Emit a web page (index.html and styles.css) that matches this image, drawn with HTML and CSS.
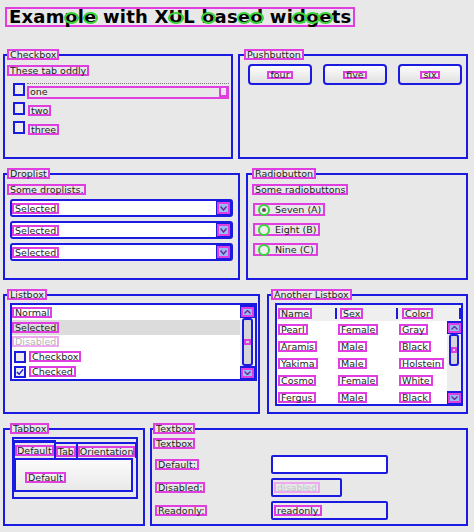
FILE: index.html
```html
<!DOCTYPE html>
<html lang="en">
<head>
    <meta charset="UTF-8">
    <meta name="viewport" content="width=device-width, initial-scale=1.0">
    <title>Example with XUL based widgets</title>
    <link rel="stylesheet" href="styles.css">
</head>
<body>
    <h1 class="title"><span class="t">Exam<span class="ring">p</span>l<span class="ring">e</span> with X<span class="ring">U</span>L <span class="ring">b</span>as<span class="ring">e</span><span class="ring">d</span> wi<span class="ring">d</span><span class="ring">g</span><span class="ring">e</span>ts</span></h1>

    <div class="rows">
        <div class="row row-1">
            <fieldset class="group group-check">
                <legend class="t">Checkbox</legend>
                <div class="group-body">
                    <span class="t">These tab oddly</span>
                    <div class="checks">
                        <div class="check">
                            <span class="checkbox"></span>
                            <span class="focus-line"><span class="t t-wide">one<span class="mini"></span></span></span>
                        </div>
                        <div class="check">
                            <span class="checkbox"></span>
                            <span class="t">two</span>
                        </div>
                        <div class="check">
                            <span class="checkbox"></span>
                            <span class="t">three</span>
                        </div>
                    </div>
                </div>
            </fieldset>

            <fieldset class="group group-push">
                <legend class="t">Pushbutton</legend>
                <div class="buttons">
                    <button class="btn"><span class="t">four</span></button>
                    <button class="btn"><span class="t">five</span></button>
                    <button class="btn"><span class="t">six</span></button>
                </div>
            </fieldset>
        </div>

        <div class="row row-2">
            <fieldset class="group">
                <legend class="t">Droplist</legend>
                <div class="group-body">
                    <span class="t">Some droplists.</span>
                    <div class="menulists">
                        <div class="menulist">
                            <span class="t">Selected</span>
                            <span class="drop"><span class="drop-arrow"><svg width="7" height="5" viewBox="0 0 7 5"><polyline points="0.5,0.5 3.5,4 6.5,0.5" fill="none" stroke="#6b2590" stroke-width="1.4"/></svg></span></span>
                        </div>
                        <div class="menulist">
                            <span class="t">Selected</span>
                            <span class="drop"><span class="drop-arrow"><svg width="7" height="5" viewBox="0 0 7 5"><polyline points="0.5,0.5 3.5,4 6.5,0.5" fill="none" stroke="#6b2590" stroke-width="1.4"/></svg></span></span>
                        </div>
                        <div class="menulist">
                            <span class="t">Selected</span>
                            <span class="drop"><span class="drop-arrow"><svg width="7" height="5" viewBox="0 0 7 5"><polyline points="0.5,0.5 3.5,4 6.5,0.5" fill="none" stroke="#6b2590" stroke-width="1.4"/></svg></span></span>
                        </div>
                    </div>
                </div>
            </fieldset>

            <fieldset class="group group-radio">
                <legend class="t">Radiobutton</legend>
                <div class="group-body">
                    <span class="t">Some radiobuttons</span>
                    <div class="radios">
                        <span class="radio"><span class="radio-dot checked"></span>Seven (A)</span>
                        <span class="radio"><span class="radio-dot"></span>Eight (B)</span>
                        <span class="radio"><span class="radio-dot"></span>Nine (C)</span>
                    </div>
                </div>
            </fieldset>
        </div>

        <div class="row row-3">
            <fieldset class="group group-list">
                <legend class="t">Listbox</legend>
                <div class="listbox">
                    <div class="list-items">
                        <div class="item"><span class="t">Normal</span></div>
                        <div class="item selected"><span class="t">Selected</span></div>
                        <div class="item disabled"><span class="t">Disabled</span></div>
                        <div class="item"><span class="checkbox small"></span><span class="t">Checkbox</span></div>
                        <div class="item">
                            <span class="checkbox small"><svg width="9" height="8" viewBox="0 0 9 8"><polyline points="1,4 3.5,6.5 8,1" fill="none" stroke="#1a1ae0" stroke-width="1.6"/></svg></span>
                            <span class="t">Checked</span>
                        </div>
                    </div>
                    <div class="scrollbar">
                        <span class="sb-btn"><span class="sb-arrow"><svg width="7" height="4" viewBox="0 0 7 4"><polyline points="0.5,3.5 3.5,0.5 6.5,3.5" fill="none" stroke="#6b2590" stroke-width="1.3"/></svg></span></span>
                        <span class="sb-track"><span class="sb-thumb fill"><span class="grip"></span></span></span>
                        <span class="sb-btn"><span class="sb-arrow"><svg width="7" height="4" viewBox="0 0 7 4"><polyline points="0.5,0.5 3.5,3.5 6.5,0.5" fill="none" stroke="#6b2590" stroke-width="1.3"/></svg></span></span>
                    </div>
                </div>
            </fieldset>

            <fieldset class="group group-tree">
                <legend class="t">Another Listbox</legend>
                <div class="tree">
                    <div class="tree-head">
                        <span class="th"><span class="t">Name</span></span>
                        <span class="th"><span class="t">Sex</span></span>
                        <span class="th"><span class="t">Color</span></span>
                        <span class="th"></span>
                    </div>
                    <div class="tree-body">
                        <div class="tree-rows">
                            <div class="tree-row"><span class="t">Pearl</span><span class="t">Female</span><span class="t">Gray</span></div>
                            <div class="tree-row"><span class="t">Aramis</span><span class="t">Male</span><span class="t">Black</span></div>
                            <div class="tree-row"><span class="t">Yakima</span><span class="t">Male</span><span class="t">Holstein</span></div>
                            <div class="tree-row"><span class="t">Cosmo</span><span class="t">Female</span><span class="t">White</span></div>
                            <div class="tree-row"><span class="t">Fergus</span><span class="t">Male</span><span class="t">Black</span></div>
                        </div>
                        <div class="scrollbar narrow">
                            <span class="sb-btn"><span class="sb-arrow"><svg width="7" height="4" viewBox="0 0 7 4"><polyline points="0.5,3.5 3.5,0.5 6.5,3.5" fill="none" stroke="#6b2590" stroke-width="1.3"/></svg></span></span>
                            <span class="sb-track"><span class="sb-thumb"><span class="grip"></span></span></span>
                            <span class="sb-btn"><span class="sb-arrow"><svg width="7" height="4" viewBox="0 0 7 4"><polyline points="0.5,0.5 3.5,3.5 6.5,0.5" fill="none" stroke="#6b2590" stroke-width="1.3"/></svg></span></span>
                        </div>
                    </div>
                </div>
            </fieldset>
        </div>

        <div class="row row-4">
            <fieldset class="group group-tabs">
                <legend class="t">Tabbox</legend>
                <div class="tabbox">
                    <div class="tabs">
                        <span class="tab selected"><span class="t">Default</span></span>
                        <span class="tab"><span class="t">Tab</span></span>
                        <span class="tab"><span class="t">Orientation</span></span>
                    </div>
                    <div class="tabpanel"><span class="t">Default</span></div>
                </div>
            </fieldset>

            <fieldset class="group group-text">
                <legend class="t">Textbox</legend>
                <div class="group-body">
                    <span class="t">Textbox</span>
                    <div class="form">
                        <span class="t">Default:</span>
                        <span class="field"></span>
                        <span class="t">Disabled:</span>
                        <span class="field disabled"><span class="t">disabled</span></span>
                        <span class="t">Readonly:</span>
                        <span class="field readonly"><span class="t">readonly</span></span>
                    </div>
                </div>
            </fieldset>
        </div>
    </div>
</body>
</html>
```

FILE: styles.css
```css
* {
    margin: 0;
    padding: 0;
    box-sizing: border-box;
}

body {
    font-family: 'DejaVu Sans', Verdana, sans-serif;
    font-size: 9.5px;
    color: #1e1e1e;
    background-color: #e8e8e8;
    padding: 7px 6px 0 3px;
}

/* text runs get a magenta frame */
.t {
    display: inline-block;
    border: 2px solid #e03ee0;
    padding: 0 1px;
    line-height: 7px;
    white-space: nowrap;
}

.title {
    display: flex;
    font-size: 18px;
    font-weight: bold;
    letter-spacing: 0.2px;
    color: #000;
    margin: 0 0 22px 2px;
}

.title .t {
    line-height: 16px;
    padding: 0 2px;
}

.ring {
    position: relative;
}

.ring::after {
    content: '';
    position: absolute;
    left: -1px;
    right: -1px;
    top: 6px;
    bottom: 3px;
    border: 2px solid #38d438;
    border-radius: 50%;
}

.rows {
    display: flex;
    flex-direction: column;
    gap: 9px;
}

.row {
    display: grid;
}

.row-1 {
    grid-template-columns: 230px 1fr;
    column-gap: 5px;
    height: 110px;
}

.row-2 {
    grid-template-columns: 237px 1fr;
    column-gap: 6px;
    height: 112px;
}

.row-3 {
    grid-template-columns: 257px 1fr;
    column-gap: 7px;
    height: 125px;
}

.row-4 {
    grid-template-columns: 142px 1fr;
    column-gap: 5px;
    height: 103px;
}

/* group boxes */
.group {
    border: 2px solid #1a1ae0;
    padding: 5px 2px 0;
    min-width: 0;
}

.group-body {
    display: flex;
    flex-direction: column;
    align-items: flex-start;
}

.group-push {
    padding: 4px 4px 0;
}

.group-radio {
    padding-left: 4px;
}

.group-list,
.group-tree {
    padding: 3px 0 0 2px;
}

.group-tabs {
    padding: 3px 2px 0 5px;
}

.group-text {
    padding: 4px 2px 0 1px;
}

/* checkboxes */
.checks {
    display: flex;
    flex-direction: column;
    gap: 6px;
    margin-top: 7px;
    align-self: stretch;
}

.check {
    display: flex;
    align-items: flex-start;
    gap: 3px;
    height: 13px;
    margin-left: 6px;
}

.check .t {
    margin-top: 3px;
}

.checkbox {
    flex-shrink: 0;
    width: 12px;
    height: 13px;
    border: 2px solid #1a1ae0;
    background-color: #ececec;
    display: flex;
    align-items: center;
    justify-content: center;
}

.checkbox.small {
    width: 12px;
    height: 12px;
    margin-left: 2px;
}

.focus-line {
    flex: 1;
    display: flex;
    border-top: 1px dotted #7a7a7a;
    margin-left: -1px;
    padding-top: 2px;
}

.focus-line .t {
    margin-top: 0;
}

.t-wide {
    flex: 1;
    display: flex;
    justify-content: space-between;
}

.mini {
    width: 9px;
    height: 11px;
    margin: -2px -2px 0 0;
    border: 2px solid #e03ee0;
}

/* push buttons */
.buttons {
    display: flex;
    gap: 11px;
    padding-left: 4px;
}

.btn {
    width: 64px;
    height: 21px;
    border: 2px solid #1a1ae0;
    border-radius: 4px;
    background: linear-gradient(#fdfdfd, #e0e0e0);
    display: flex;
    align-items: center;
    justify-content: center;
    font: inherit;
    color: inherit;
}

.btn .t {
    line-height: 4px;
}

/* droplists */
.menulists {
    display: flex;
    flex-direction: column;
    gap: 4px;
    margin-top: 4px;
    align-self: stretch;
}

.menulist {
    height: 18px;
    margin: 0 3px;
    border: 2px solid #1a1ae0;
    border-radius: 3px;
    background-color: #fff;
    display: flex;
    align-items: center;
    justify-content: space-between;
}

.drop {
    align-self: stretch;
    width: 15px;
    padding: 1px;
    background-color: #1a1ae0;
    display: flex;
}

.drop-arrow {
    flex: 1;
    background-color: #93bcf6;
    border: 2px solid #e03ee0;
    display: flex;
    align-items: center;
    justify-content: center;
}

/* radio buttons */
.radios {
    display: flex;
    flex-direction: column;
    align-items: flex-start;
    gap: 7px;
    margin: 8px 0 0 1px;
}

.radio {
    display: flex;
    align-items: center;
    gap: 5px;
    height: 13px;
    padding: 0 2px 0 3px;
    border: 2px solid #e03ee0;
    white-space: nowrap;
}

.radio-dot {
    width: 12px;
    height: 12px;
    border: 2px solid #38d438;
    border-radius: 50%;
    background-color: #f0f0f0;
    display: flex;
    align-items: center;
    justify-content: center;
}

.radio-dot.checked::after {
    content: '';
    width: 4px;
    height: 4px;
    border-radius: 50%;
    background-color: #555;
}

/* listbox */
.listbox {
    display: flex;
    height: 78px;
    margin-left: 3px;
    width: 247px;
    border: 2px solid #1a1ae0;
    background-color: #fff;
}

.list-items {
    flex: 1;
    display: flex;
    flex-direction: column;
}

.item {
    height: 15px;
    display: flex;
    align-items: center;
    gap: 3px;
}

.item.selected {
    background-color: #dcdcdc;
}

.item.disabled {
    color: #b4b4b4;
}

.item.disabled .t {
    border-color: #eeaaee;
}

.scrollbar {
    width: 15px;
    display: flex;
    flex-direction: column;
    background-color: #ececec;
}

.scrollbar.narrow {
    width: 14px;
}

.sb-btn {
    height: 13px;
    border: 2px solid #1a1ae0;
    background-color: #93bcf6;
    display: flex;
    align-items: center;
    justify-content: center;
}

.sb-arrow {
    display: flex;
    padding: 1px;
    border: 2px solid #e03ee0;
}

.sb-track {
    flex: 1;
    display: flex;
    flex-direction: column;
    padding: 0 2px;
}

.sb-thumb {
    height: 32px;
    border: 2px solid #1a1ae0;
    border-radius: 3px;
    background-color: #d6d6d6;
    display: flex;
    align-items: center;
    justify-content: center;
}

.sb-thumb.fill {
    flex: 1;
}

.grip {
    width: 9px;
    height: 6px;
    border: 2px solid #e03ee0;
}

/* tree */
.tree {
    margin-left: 4px;
    width: 188px;
    height: 103px;
    border: 2px solid #1a1ae0;
    background-color: #fff;
    display: flex;
    flex-direction: column;
    overflow: hidden;
}

.tree-head {
    height: 16px;
    flex-shrink: 0;
    display: grid;
    grid-template-columns: 58px 61px 63px 1fr;
    align-items: center;
    background-color: #efefef;
}

.th {
    height: 11px;
    display: flex;
    padding-left: 1px;
}

.th + .th {
    border-left: 2px solid #1a1ae0;
    padding-left: 3px;
}

.th:nth-child(3) {
    padding-left: 4px;
}

.tree-body {
    flex: 1;
    display: flex;
    min-height: 0;
}

.tree-rows {
    flex: 1;
    display: flex;
    flex-direction: column;
}

.tree-row {
    height: 17px;
    flex-shrink: 0;
    display: grid;
    grid-template-columns: 60px 61px 1fr;
    align-items: center;
    justify-items: start;
    padding-left: 1px;
}

/* tabbox */
.tabbox {
    width: 126px;
    margin-left: 2px;
    border: 2px solid #1a1ae0;
    padding: 1px 1px 5px 0;
}

.tabs {
    display: flex;
    align-items: flex-end;
    height: 18px;
}

.tab {
    height: 16px;
    border-top: 2px solid #1a1ae0;
    border-right: 2px solid #1a1ae0;
    display: flex;
    align-items: center;
}

.tab.selected {
    height: 18px;
    border-top-width: 3px;
    border-left: 1px solid #1a1ae0;
}

.tab .t {
    padding: 0;
}

.tabpanel {
    height: 34px;
    margin-right: 2px;
    border: 2px solid #1a1ae0;
    background: linear-gradient(#fbfbfb, #e9e9e9);
    padding: 12px 0 0 9px;
}

/* textboxes */
.form {
    display: grid;
    grid-template-columns: 116px auto;
    row-gap: 4px;
    margin: 6px 0 0 2px;
    align-items: center;
    justify-items: start;
}

.field {
    width: 117px;
    height: 19px;
    border: 2px solid #1a1ae0;
    border-radius: 2px;
    background-color: #fff;
    display: flex;
    align-items: center;
    padding-left: 1px;
}

.field.disabled {
    width: 71px;
    background-color: #e8e8e8;
    color: #c4c4c4;
}

.field.disabled .t {
    border-color: #eeaaee;
}

.field.readonly {
    background-color: #ececec;
}
```
